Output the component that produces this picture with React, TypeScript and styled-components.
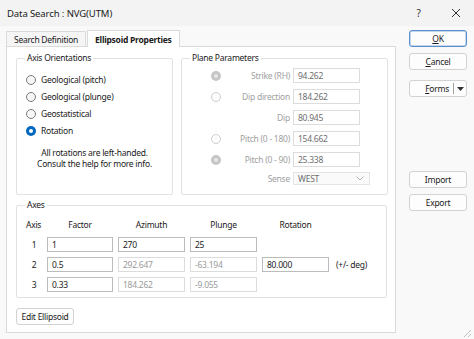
import React from "react";
import styled, { createGlobalStyle, css } from "styled-components";

const GlobalStyle = createGlobalStyle`
  html, body {
    margin: 0;
    padding: 0;
    background: #f9f9f9;
  }
  * {
    box-sizing: border-box;
  }
`;

const FONT = `"Noto Sans", "Open Sans", sans-serif`;

type RadioState = "on" | "off" | "disabled" | "disabledOn";

const planeRows: { radio?: RadioState; label: string; value: string }[] = [
  { radio: "disabledOn", label: "Strike (RH)", value: "94.262" },
  { radio: "disabled", label: "Dip direction", value: "184.262" },
  { label: "Dip", value: "80.945" },
  { radio: "disabled", label: "Pitch (0 - 180)", value: "154.662" },
  { radio: "disabledOn", label: "Pitch (0 - 90)", value: "25.338" },
];

const axes = [
  { n: "1", factor: "1", azimuth: "270", plunge: "25", locked: false },
  { n: "2", factor: "0.5", azimuth: "292.647", plunge: "-63.194", locked: true, rotation: "80.000" },
  { n: "3", factor: "0.33", azimuth: "184.262", plunge: "-9.055", locked: true },
];

function App() {
  return (
    <Window>
      <GlobalStyle />
      <TitleBar>
        <Title>Data Search : NVG(UTM)</Title>
        <TitleButtons>
          <TitleButton>?</TitleButton>
          <TitleButton>
            <svg width="10" height="10" viewBox="0 0 10 10">
              <path d="M1 1 L9 9 M9 1 L1 9" stroke="#333" strokeWidth="1" />
            </svg>
          </TitleButton>
        </TitleButtons>
      </TitleBar>

      <Body>
        <TabArea>
          <TabStrip>
            <Tab>Search Definition</Tab>
            <Tab $active>Ellipsoid Properties</Tab>
          </TabStrip>
          <Panel>
            <TopRow>
              <Group $w={157} $h={143}>
                <Legend>Axis Orientations</Legend>
                <RadioList>
                  <RadioRow><Radio $state="off" />Geological (pitch)</RadioRow>
                  <RadioRow><Radio $state="off" />Geological (plunge)</RadioRow>
                  <RadioRow><Radio $state="off" />Geostatistical</RadioRow>
                  <RadioRow><Radio $state="on" />Rotation</RadioRow>
                </RadioList>
                <Note>
                  All rotations are left-handed.
                  <br />
                  Consult the help for more info.
                </Note>
              </Group>
              <Group $w={207} $h={143}>
                <Legend>Plane Parameters</Legend>
                <PlaneGrid>
                  {planeRows.map((r) => (
                    <React.Fragment key={r.label}>
                      <RadioCell>{r.radio && <Radio $state={r.radio} />}</RadioCell>
                      <PlaneLabel>{r.label}</PlaneLabel>
                      <Field $w={67} $disabled $dark>{r.value}</Field>
                    </React.Fragment>
                  ))}
                  <RadioCell />
                  <PlaneLabel $tight>Sense</PlaneLabel>
                  <Select>
                    WEST
                    <svg width="8" height="5" viewBox="0 0 8 5">
                      <path d="M0.5 0.5 L4 4 L7.5 0.5" fill="none" stroke="#b0b0b0" strokeWidth="1" />
                    </svg>
                  </Select>
                </PlaneGrid>
              </Group>
            </TopRow>

            <Group $w={371} $h={99}>
              <Legend>Axes</Legend>
              <AxesGrid>
                <HeadCell $left>Axis</HeadCell>
                <HeadCell>Factor</HeadCell>
                <HeadCell>Azimuth</HeadCell>
                <HeadCell>Plunge</HeadCell>
                <HeadCell>Rotation</HeadCell>
                <span />
                {axes.map((a) => (
                  <React.Fragment key={a.n}>
                    <AxisNum>{a.n}</AxisNum>
                    <Field>{a.factor}</Field>
                    <Field $disabled={a.locked}>{a.azimuth}</Field>
                    <Field $disabled={a.locked}>{a.plunge}</Field>
                    {a.rotation ? <Field>{a.rotation}</Field> : <span />}
                    {a.rotation ? <Unit>(+/- deg)</Unit> : <span />}
                  </React.Fragment>
                ))}
              </AxesGrid>
            </Group>

            <Button $w={58}>Edit Ellipsoid</Button>
          </Panel>
        </TabArea>

        <SideButtons>
          <Button $w={58} $default>
            <u>O</u>K
          </Button>
          <Button $w={58}>
            <u>C</u>ancel
          </Button>
          <SplitButton $w={58}>
            <SplitMain>
              <u>F</u>orms
            </SplitMain>
            <SplitArrow>
              <svg width="7" height="4" viewBox="0 0 7 4">
                <path d="M0 0 L7 0 L3.5 4 Z" fill="#333" />
              </svg>
            </SplitArrow>
          </SplitButton>
          <Spacer />
          <Button $w={58}>Import</Button>
          <Button $w={58}>Export</Button>
        </SideButtons>
      </Body>
      <Grip>
        <svg width="10" height="10" viewBox="0 0 10 10">
          <path d="M2 9 L9 2 M6 9 L9 6" stroke="#c0c0c0" strokeWidth="1" />
        </svg>
      </Grip>
    </Window>
  );
}

export default App;

const Window = styled.div`
  position: relative;
  width: 474px;
  height: 339px;
  overflow: hidden;
  background: #f9f9f9;
  font-family: ${FONT};
  font-size: 8.5px;
  letter-spacing: -0.25px;
  color: #1a1a1a;
  display: flex;
  flex-direction: column;
`;

const TitleBar = styled.div`
  height: 26px;
  display: flex;
  align-items: center;
  justify-content: space-between;
  padding-left: 7px;
  background: #f3f3f3;
`;

const Title = styled.div`
  font-size: 9.5px;
  letter-spacing: -0.1px;
  color: #1a1a1a;
`;

const TitleButtons = styled.div`
  display: flex;
  align-items: center;
`;

const TitleButton = styled.div`
  width: 37px;
  height: 26px;
  display: flex;
  align-items: center;
  justify-content: center;
  font-size: 10px;
  color: #333;
`;

const Body = styled.div`
  display: flex;
  padding-left: 6px;
  padding-top: 4px;
`;

const TabArea = styled.div`
  width: 390px;
  display: flex;
  flex-direction: column;
`;

const TabStrip = styled.div`
  display: flex;
  align-items: flex-end;
  height: 16px;
  position: relative;
  z-index: 1;
`;

const Tab = styled.div<{ $active?: boolean }>`
  height: ${(p) => (p.$active ? "17px" : "15px")};
  display: flex;
  align-items: center;
  padding: 0 7px;
  border: 1px solid #dadada;
  border-bottom: none;
  background: ${(p) => (p.$active ? "#ffffff" : "#f5f5f5")};
  font-weight: ${(p) => (p.$active ? 700 : 400)};
  margin-bottom: ${(p) => (p.$active ? "-1px" : "0")};
  margin-left: ${(p) => (p.$active ? "1px" : "0")};
`;

const Panel = styled.div`
  height: 287px;
  background: #ffffff;
  border: 1px solid #dadada;
  padding: 11px 0 0 9px;
  display: flex;
  flex-direction: column;
  align-items: flex-start;
  gap: 10px;
`;

const TopRow = styled.div`
  display: flex;
  gap: 8px;
`;

const Group = styled.fieldset<{ $w: number; $h: number }>`
  width: ${(p) => p.$w}px;
  height: ${(p) => p.$h}px;
  margin: 0;
  padding: 0 0 0 9px;
  min-width: 0;
  border: 1px solid #e2e2e2;
  border-radius: 2px;
  margin-top: -6px;
`;

const Legend = styled.legend`
  padding: 0 2px;
  margin-left: -1px;
  line-height: 12px;
`;

const RadioList = styled.div`
  display: flex;
  flex-direction: column;
  gap: 6px;
  margin-top: 10px;
`;

const RadioRow = styled.div`
  display: flex;
  align-items: center;
  gap: 5px;
  height: 11px;
`;

const radioStyles = {
  on: css`
    background: #0067c0;
    border: none;
    &::after {
      content: "";
      position: absolute;
      left: 3px;
      top: 3px;
      width: 4px;
      height: 4px;
      border-radius: 50%;
      background: #fff;
    }
  `,
  off: css`
    background: #f6f6f6;
    border: 1px solid #7a7a7a;
  `,
  disabled: css`
    background: #fbfbfb;
    border: 1px solid #d0d0d0;
  `,
  disabledOn: css`
    background: #c6c6c6;
    border: none;
    &::after {
      content: "";
      position: absolute;
      left: 3px;
      top: 3px;
      width: 4px;
      height: 4px;
      border-radius: 50%;
      background: #e8e8e8;
    }
  `,
};

const Radio = styled.span<{ $state: RadioState }>`
  position: relative;
  display: inline-block;
  flex: none;
  width: 10px;
  height: 10px;
  border-radius: 50%;
  ${(p) => radioStyles[p.$state]}
`;

const Note = styled.div`
  margin-top: 11px;
  margin-left: -9px;
  text-align: center;
  line-height: 11px;
`;

const PlaneGrid = styled.div`
  display: grid;
  grid-template-columns: 20px 56px 67px;
  column-gap: 3px;
  row-gap: 6px;
  align-items: center;
  margin-top: 4px;
  padding-left: 20px;
`;

const RadioCell = styled.div`
  display: flex;
  align-items: center;
  height: 15px;
`;

const PlaneLabel = styled.div<{ $tight?: boolean }>`
  display: flex;
  justify-content: flex-end;
  white-space: nowrap;
  color: #a0a0a0;
  margin-top: ${(p) => (p.$tight ? "-4px" : "0")};
`;

const Field = styled.div<{ $w?: number; $disabled?: boolean; $dark?: boolean }>`
  width: ${(p) => (p.$w ? `${p.$w}px` : "auto")};
  height: 15px;
  display: flex;
  align-items: center;
  padding-left: 4px;
  background: #ffffff;
  border: 1px solid ${(p) => (p.$disabled ? "#dcdcdc" : "#bcbcbc")};
  color: ${(p) => (p.$disabled ? (p.$dark ? "#6e6e6e" : "#9a9a9a") : "#1a1a1a")};
`;

const Select = styled.div`
  width: 77px;
  height: 13px;
  margin-top: -4px;
  display: flex;
  align-items: center;
  justify-content: space-between;
  padding: 0 5px 0 4px;
  border: 1px solid #e4e4e4;
  background: #fafafa;
  color: #6e6e6e;
`;

const AxesGrid = styled.div`
  display: grid;
  grid-template-columns: 16px 66px 67px 67px 67px auto;
  grid-template-rows: 16px 15px 15px 15px;
  column-gap: 5px;
  row-gap: 5px;
  align-items: center;
  margin-top: 5px;
`;

const HeadCell = styled.div<{ $left?: boolean }>`
  text-align: ${(p) => (p.$left ? "left" : "center")};
  white-space: nowrap;
`;

const AxisNum = styled.div`
  text-align: center;
`;

const Unit = styled.div`
  margin-left: 2px;
  white-space: nowrap;
`;

const Button = styled.div<{ $w: number; $default?: boolean }>`
  width: ${(p) => p.$w}px;
  height: 17px;
  flex: none;
  display: flex;
  align-items: center;
  justify-content: center;
  background: #fdfdfd;
  border: 1px solid ${(p) => (p.$default ? "#5a8fcf" : "#d2d2d2")};
  box-shadow: ${(p) => (p.$default ? "inset 0 0 0 0.5px #8ab0dc" : "none")};
  border-radius: 3px;
  color: #1a1a1a;
  white-space: nowrap;
`;

const SideButtons = styled.div`
  display: flex;
  flex-direction: column;
  gap: 6px;
  margin-left: 13px;
  height: 181px;
`;

const SplitButton = styled(Button)`
  margin-top: 4px;
  justify-content: flex-start;
`;

const SplitMain = styled.div`
  flex: 1;
  text-align: right;
  padding-right: 4px;
`;

const SplitArrow = styled.div`
  width: 13px;
  height: 11px;
  border-left: 1px solid #a0a0a0;
  display: flex;
  align-items: center;
  justify-content: center;
`;

const Spacer = styled.div`
  flex: 1;
`;

const Grip = styled.div`
  position: absolute;
  right: 2px;
  bottom: 1px;
  line-height: 0;
`;
